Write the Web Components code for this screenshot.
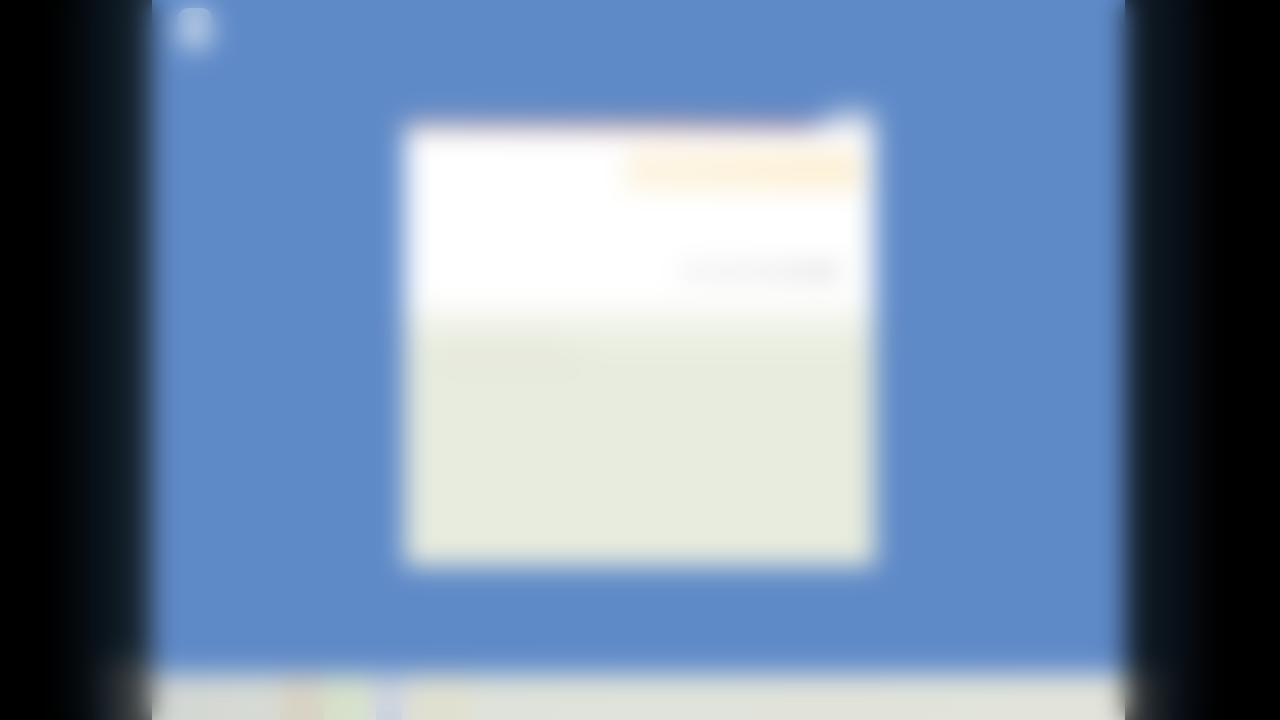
<!DOCTYPE html>
<html>
<head>
<meta charset="utf-8">
<title>desktop</title>
<style>
html, body { margin: 0; width: 1280px; height: 720px; background: #000; overflow: hidden; }
</style>
</head>
<body>
<crt-photo>
    <desk-top>
        <desk-icon></desk-icon>
        <xp-window></xp-window>
        <task-bar slot="bar"></task-bar>
    </desk-top>
</crt-photo>
<script>
customElements.define('crt-photo', class extends HTMLElement {
    constructor() {
        super();
        this.attachShadow({mode: 'open'}).innerHTML = `
        <style>
        :host { display: grid; grid-template-columns: 152px 973px 155px; width: 1280px; height: 720px; position: relative; }
        .left { background: linear-gradient(90deg, #000 0 55px, #060c12 85px, #0e1a24 120px, #22303c 152px); position: relative; }
        .right { background: linear-gradient(90deg, #16222e 0, #0d1720 25px, #080e16 60px, #000 88px); position: relative; }
        .left::after { content: ''; position: absolute; right: 0; bottom: 0; width: 60px; height: 60px; background: linear-gradient(90deg, transparent, #4c4e4c); }
        .right::after { content: ''; position: absolute; left: 0; bottom: 0; width: 50px; height: 50px; background: linear-gradient(90deg, #3a3c3a, transparent); }
        /* the whole photo is out of focus */
        .lens { position: absolute; inset: 0; backdrop-filter: blur(13px); }
        </style>
        <div class="left"></div>
        <slot></slot>
        <div class="right"></div>
        <div class="lens"></div>`;
    }
});

customElements.define('desk-top', class extends HTMLElement {
    constructor() {
        super();
        this.attachShadow({mode: 'open'}).innerHTML = `
        <style>
        :host { display: flex; flex-direction: column; height: 720px; background: #5f8ac8; }
        .area { flex: 1; position: relative; }
        .bar { flex: none; height: 46px; }
        </style>
        <div class="area"><slot></slot></div>
        <div class="bar"><slot name="bar"></slot></div>`;
    }
});

customElements.define('desk-icon', class extends HTMLElement {
    constructor() {
        super();
        this.attachShadow({mode: 'open'}).innerHTML = `
        <style>
        :host { position: absolute; left: 26px; top: 8px; width: 34px; height: 42px; background: #bccee6; border-radius: 10px; }
        </style>`;
    }
});

customElements.define('xp-window', class extends HTMLElement {
    constructor() {
        super();
        this.attachShadow({mode: 'open'}).innerHTML = `
        <style>
        :host { position: absolute; left: 253px; top: 120px; width: 470px; height: 446px; display: flex; flex-direction: column; }
        .title { flex: none; height: 10px; background: linear-gradient(90deg, #b8a4b0, #b89090 55%, #9c7c94 85%, #d8dce4 90%); }
        .corner { position: absolute; right: 0; top: -12px; width: 44px; height: 12px; background: #aebfd8; }
        .head { flex: none; height: 168px; background: #fff; display: flex; flex-direction: column; align-items: flex-end; padding: 20px 14px 0 0; box-sizing: border-box; }
        .peach { width: 236px; height: 40px; background: linear-gradient(90deg, #fdf4e0, #fcf0d4); }
        .smudge { width: 160px; height: 12px; margin: 76px 22px 0 0; background: linear-gradient(90deg, #ececec, #e6e6e6 60%, #d4d4d8); }
        .body { flex: 1; background: linear-gradient(#fff, #eef1e6 30px, #e8ecde 60px); display: flex; flex-direction: column; padding: 42px 0 0 30px; }
        .line { width: 130px; height: 5px; background: #dfe1d4; margin-bottom: 16px; }
        .line.b { width: 150px; }
        </style>
        <div class="corner"></div>
        <div class="title"></div>
        <div class="head"><div class="peach"></div><div class="smudge"></div></div>
        <div class="body"><div class="line"></div><div class="line b"></div></div>`;
    }
});

customElements.define('task-bar', class extends HTMLElement {
    constructor() {
        super();
        this.attachShadow({mode: 'open'}).innerHTML = `
        <style>
        :host { display: flex; height: 46px; background: linear-gradient(90deg, #d2d6d2, #dfe2da 30%, #e2e4da); padding-left: 128px; }
        div { flex: none; height: 46px; }
        .o { width: 44px; background: #d8d2c4; }
        .g { width: 44px; background: #d6e2cc; }
        .sp { width: 8px; }
        .bl { width: 26px; background: #c8d0e0; }
        .y { width: 60px; background: #e0e0d0; margin-left: 8px; }
        </style>
        <div class="o"></div><div class="g"></div><div class="sp"></div><div class="bl"></div><div class="y"></div>`;
    }
});
</script>
</body>
</html>
